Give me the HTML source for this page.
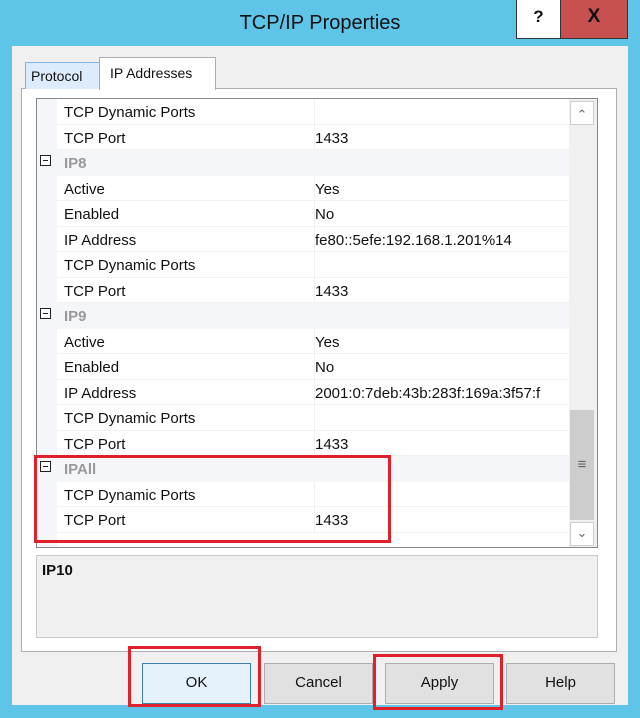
<!DOCTYPE html><html><head><style>
*{margin:0;padding:0;box-sizing:border-box}
body{width:640px;height:718px;background:#5ec5e8;position:relative;overflow:hidden;font-family:"Liberation Sans",sans-serif;font-size:15px;color:#111}
.a{position:absolute}
.title{left:0;top:12px;width:640px;text-align:center;font-size:20px;color:#111}
.row{position:absolute;left:57px;width:512px;height:25.5px;border-bottom:1px solid #f2f2f2;background:#fff}
.row span{position:absolute;top:5px}
.row .n{left:7px}.row .v{left:258px}
.row:after{content:"";position:absolute;left:257px;top:0;bottom:0;border-left:1px solid #f0f0f0}
.cat{position:absolute;left:37px;width:532px;height:25.5px;background:#f4f6fa}
.cat span{position:absolute;left:27px;top:5px;color:#999;font-weight:bold}
.cat i{position:absolute;left:3px;top:5px;width:11px;height:11px;border:1px solid #222;background:#fff}
.cat i:after{content:"";position:absolute;left:2px;top:4px;width:5px;height:1px;background:#222}
.btn{position:absolute;top:663px;width:109px;height:41px;background:#e1e1e1;border:1px solid #adadad;text-align:center;line-height:37px}
.red{position:absolute;border:3px solid #e0202a}
</style></head><body>
<div class="a title">TCP/IP Properties</div>
<div class="a" style="left:516px;top:0;width:45px;height:39px;background:#fff;border:1px solid #333;border-top:none;text-align:center;font-weight:bold;font-size:17px;line-height:34px">?</div>
<div class="a" style="left:560px;top:0;width:68px;height:39px;background:#c75050;border:1px solid #333;border-top:none;text-align:center;font-weight:bold;font-size:19px;line-height:34px;color:#111">X</div>
<div class="a" style="left:12px;top:46px;width:616px;height:659px;background:#f0f0f0"></div>
<div class="a" style="left:21px;top:88px;width:596px;height:564px;background:#fff;border:1px solid #adadad"></div>
<div class="a" style="left:25px;top:62px;width:75px;height:27px;background:#dcecfc;border:1px solid #7eb4ea;border-bottom:none;padding:5px 0 0 5px;font-size:14px">Protocol</div>
<div class="a" style="left:99px;top:57px;width:117px;height:33px;background:#fff;border:1px solid #adadad;border-bottom:none;padding:7px 0 0 10px;font-size:14px">IP Addresses</div>
<div class="a" style="left:36px;top:98px;width:562px;height:450px;border:1px solid #828790;background:#f4f6fa;overflow:hidden">
<div style="position:absolute;left:-37px;top:-99px;width:640px;height:700px">
<div class="row" style="top:99px"><span class="n">TCP Dynamic Ports</span></div>
<div class="row" style="top:124.5px"><span class="n">TCP Port</span><span class="v">1433</span></div>
<div class="cat" style="top:150px"><i></i><span>IP8</span></div>
<div class="row" style="top:175.5px"><span class="n">Active</span><span class="v">Yes</span></div>
<div class="row" style="top:201px"><span class="n">Enabled</span><span class="v">No</span></div>
<div class="row" style="top:226.5px"><span class="n">IP Address</span><span class="v">fe80::5efe:192.168.1.201%14</span></div>
<div class="row" style="top:252px"><span class="n">TCP Dynamic Ports</span></div>
<div class="row" style="top:277.5px"><span class="n">TCP Port</span><span class="v">1433</span></div>
<div class="cat" style="top:303px"><i></i><span>IP9</span></div>
<div class="row" style="top:328.5px"><span class="n">Active</span><span class="v">Yes</span></div>
<div class="row" style="top:354px"><span class="n">Enabled</span><span class="v">No</span></div>
<div class="row" style="top:379.5px"><span class="n">IP Address</span><span class="v">2001:0:7deb:43b:283f:169a:3f57:f</span></div>
<div class="row" style="top:405px"><span class="n">TCP Dynamic Ports</span></div>
<div class="row" style="top:430.5px"><span class="n">TCP Port</span><span class="v">1433</span></div>
<div class="cat" style="top:456px"><i></i><span>IPAll</span></div>
<div class="row" style="top:481.5px"><span class="n">TCP Dynamic Ports</span></div>
<div class="row" style="top:507px"><span class="n">TCP Port</span><span class="v">1433</span></div>
<div class="a" style="left:57px;top:532.5px;width:512px;height:20px;background:#fff"></div>
<div class="a" style="left:569px;top:99px;width:28px;height:450px;background:#f0f0f0"></div>
<div class="a" style="left:570px;top:101px;width:24px;height:24px;background:#fff;border:1px solid #ccc;text-align:center;color:#666;font-size:13px;line-height:26px">&#8963;</div>
<div class="a" style="left:570px;top:410px;width:24px;height:110px;background:#cdcdcd;text-align:center;color:#666;line-height:110px">&#8801;</div>
<div class="a" style="left:570px;top:522px;width:24px;height:24px;background:#fff;border:1px solid #ccc;text-align:center;color:#666;font-size:13px;line-height:20px">&#8964;</div>
</div></div>
<div class="a" style="left:36px;top:555px;width:562px;height:83px;border:1px solid #c8c8c8;background:#f0f0f0;padding:6px 0 0 5px;font-weight:bold">IP10</div>
<div class="btn" style="left:142px;border-color:#3c7fb1;background:#e5f1fb">OK</div>
<div class="btn" style="left:264px">Cancel</div>
<div class="btn" style="left:385px">Apply</div>
<div class="btn" style="left:506px">Help</div>
<div class="red" style="left:34px;top:455px;width:357px;height:88px"></div>
<div class="red" style="left:128px;top:646px;width:133px;height:61px"></div>
<div class="red" style="left:373px;top:654px;width:130px;height:56px"></div>
</body></html>
